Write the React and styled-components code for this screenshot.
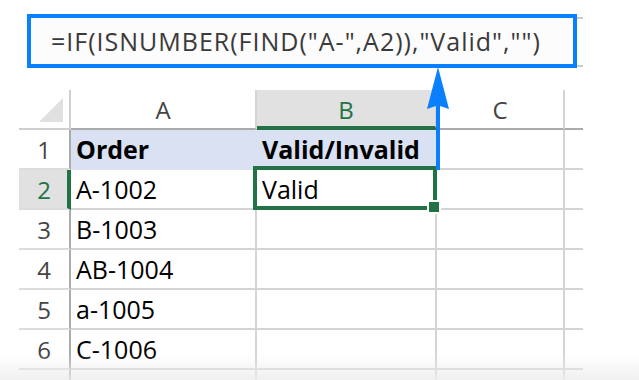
import React from "react";
import styled, { createGlobalStyle } from "styled-components";

const GlobalStyle = createGlobalStyle`
  html, body { margin: 0; padding: 0; background: #ffffff; }
  body { font-family: "Open Sans", "Noto Sans", sans-serif; }
`;

const Page = styled.div`
  position: relative;
  width: 639px;
  height: 380px;
  overflow: hidden;
  padding-top: 14px;
  box-sizing: border-box;
  background: #ffffff;
`;

const FormulaBar = styled.div`
  display: flex;
  align-items: flex-start;
  margin-left: 27px;
`;

const FormulaBox = styled.div`
  width: 550px;
  height: 54px;
  box-sizing: border-box;
  border: 4px solid #0a80ff;
  background: #fcfcfc;
  padding-left: 20px;
  display: flex;
  align-items: center;
  font-size: 25px;
  letter-spacing: 1px;
  color: #3a3a3a;
  white-space: nowrap;
`;

const FormulaTail = styled.div`
  width: 6px;
  height: 50px;
  margin-top: 3px;
  box-sizing: border-box;
  border-top: 2px solid #cdcdcd;
  border-bottom: 2px solid #cdcdcd;
`;

const Sheet = styled.div`
  display: grid;
  grid-template-columns: 52px 186px 180px 128px 18px;
  grid-auto-rows: 40px;
  margin-top: 22px;
  margin-left: 19px;
`;

const Corner = styled.div`
  display: flex;
  align-items: flex-end;
  justify-content: flex-end;
  padding: 0 6px 6px 0;
  box-sizing: border-box;
  border-right: 2px solid #d0d0d0;
  border-bottom: 2px solid #cfcfcf;
`;

const CornerMark = styled.div`
  width: 24px;
  height: 24px;
  background: #e0e0e0;
  clip-path: polygon(100% 0, 100% 100%, 0 100%);
`;

const ColHeader = styled.div`
  display: flex;
  align-items: center;
  justify-content: center;
  box-sizing: border-box;
  font-size: 24px;
  color: ${(p) => (p.$active ? "#217346" : "#444444")};
  background: ${(p) => (p.$active ? "#e1e1e1" : "#ffffff")};
  border-right: ${(p) => (p.$last ? "none" : "2px solid #d4d4d4")};
  border-bottom: ${(p) =>
    p.$active ? "4px solid #217346" : "2px solid #ababab"};
  padding-top: ${(p) => (p.$active ? "2px" : "0")};
`;

const RowHeader = styled.div`
  display: flex;
  align-items: center;
  justify-content: center;
  box-sizing: border-box;
  font-size: 24px;
  color: ${(p) => (p.$active ? "#217346" : "#444444")};
  background: ${(p) => (p.$active ? "#e1e1e1" : "#ffffff")};
  border-right: ${(p) =>
    p.$active ? "4px solid #217346" : "2px solid #ababab"};
  border-bottom: 2px solid #dcdcdc;
  padding-left: ${(p) => (p.$active ? "2px" : "0")};
`;

const Cell = styled.div`
  position: relative;
  display: flex;
  align-items: center;
  box-sizing: border-box;
  padding-left: 5px;
  font-size: 25px;
  font-weight: ${(p) => (p.$bold ? 700 : 400)};
  color: #000000;
  white-space: nowrap;
  background: ${(p) => (p.$band ? "#d9e1f2" : "#ffffff")};
  border-right: ${(p) =>
    p.$last ? "none" : `2px solid ${p.$band ? "#d9e1f2" : "#d4d4d4"}`};
  border-bottom: 2px solid ${(p) => (p.$band ? "#d9e1f2" : "#d4d4d4")};
`;

const Selection = styled.div`
  position: absolute;
  top: -4px;
  left: -4px;
  right: -2px;
  bottom: -2px;
  border: 4px solid #217346;
  pointer-events: none;
  z-index: 2;
`;

const FillHandle = styled.div`
  position: absolute;
  right: -6px;
  bottom: -6px;
  width: 10px;
  height: 10px;
  background: #217346;
  border: 2px solid #ffffff;
  z-index: 3;
`;

const Arrow = styled.svg`
  position: absolute;
  left: 427px;
  top: 67px;
  z-index: 5;
`;

const BottomFade = styled.div`
  position: absolute;
  left: 0;
  right: 0;
  bottom: 0;
  height: 26px;
  background: linear-gradient(
    to bottom,
    rgba(236, 236, 236, 0),
    rgba(236, 236, 236, 0.8)
  );
  pointer-events: none;
  z-index: 4;
`;

const columns = ["A", "B", "C", ""];
const rows = [
  { n: 1, a: "Order", b: "Valid/Invalid", band: true, bold: true },
  { n: 2, a: "A-1002", b: "Valid", active: true },
  { n: 3, a: "B-1003", b: "" },
  { n: 4, a: "AB-1004", b: "" },
  { n: 5, a: "a-1005", b: "" },
  { n: 6, a: "C-1006", b: "" },
  { n: "", a: "", b: "" },
];

export default function App() {
  return (
    <Page>
      <GlobalStyle />
      <FormulaBar>
        <FormulaBox>=IF(ISNUMBER(FIND("A-",A2)),"Valid","")</FormulaBox>
        <FormulaTail />
      </FormulaBar>
      <Sheet>
        <Corner>
          <CornerMark />
        </Corner>
        {columns.map((c, i) => (
          <ColHeader key={i} $active={c === "B"} $last={i === 3}>
            {c}
          </ColHeader>
        ))}
        {rows.map((r, i) => (
          <React.Fragment key={i}>
            <RowHeader $active={r.active}>{r.n}</RowHeader>
            <Cell $band={r.band} $bold={r.bold}>
              {r.a}
            </Cell>
            <Cell $band={r.band} $bold={r.bold}>
              {r.b}
              {r.active && (
                <>
                  <Selection />
                  <FillHandle />
                </>
              )}
            </Cell>
            <Cell />
            <Cell $last />
          </React.Fragment>
        ))}
      </Sheet>
      <Arrow width="22" height="103" viewBox="0 0 22 103">
        <polygon points="11,0 22,42 13,39 9,39 0,42" fill="#0a80ff" />
        <rect x="9" y="38" width="4" height="65" fill="#0a80ff" />
      </Arrow>
      <BottomFade />
    </Page>
  );
}
